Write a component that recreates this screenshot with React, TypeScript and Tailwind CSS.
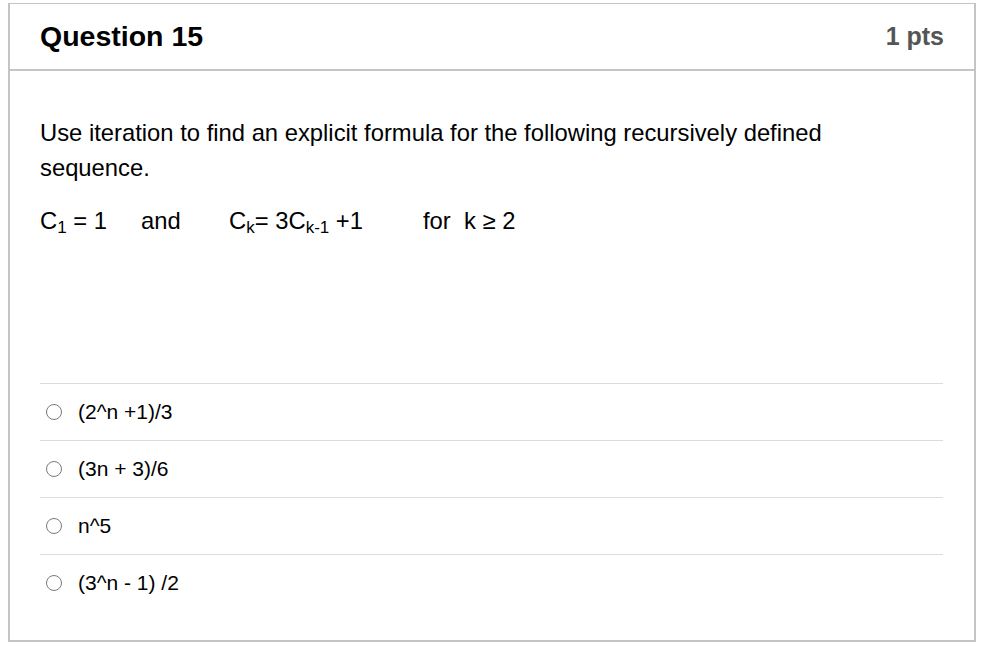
export default function App() {
  const options = ["(2^n +1)/3", "(3n + 3)/6", "n^5", "(3^n - 1) /2"];
  return (
    <div className="min-h-[656px] w-[988px] bg-white pt-[3px] pl-[8px]" style={{ fontFamily: '"Liberation Sans", Arial, sans-serif' }}>
      <div className="w-[968px] border border-[#c4c4c4] border-l-2 border-r-2 border-b-2 bg-white">
        <div className="flex h-[67px] items-center justify-between border-b-2 border-[#c4c4c4] pl-[30px] pr-[30px]">
          <div className="text-[28.5px] font-bold text-black">Question 15</div>
          <div className="text-[25px] font-bold text-[#555555]">1 pts</div>
        </div>
        <div className="pl-[30px] pr-[30px] pt-[44px] pb-[29px] text-black">
          <p className="w-[850px] text-[23.8px] leading-[35px]">
            Use iteration to find an explicit formula for the following recursively defined sequence.
          </p>
          <p className="mt-[18px] flex text-[23.8px] leading-[35px]">
            <span className="w-[101px]">C<sub className="text-[17px]">1</sub> = 1</span>
            <span className="w-[88px]">and</span>
            <span className="w-[194px]">C<sub className="text-[17px]">k</sub>= 3C<sub className="text-[17px]">k-1</sub> +1</span>
            <span>for&nbsp; k ≥ 2</span>
          </p>
          <div className="mt-[145px] w-[903px]">
            {options.map((o) => (
              <div key={o} className="flex h-[57px] items-center border-t border-[#dcdcdc]">
                <span className="ml-[6px] mr-[16px] h-[16px] w-[16px] rounded-full border border-[#7a7a7a]" />
                <span className="text-[21px]">{o}</span>
              </div>
            ))}
          </div>
        </div>
      </div>
    </div>
  );
}
